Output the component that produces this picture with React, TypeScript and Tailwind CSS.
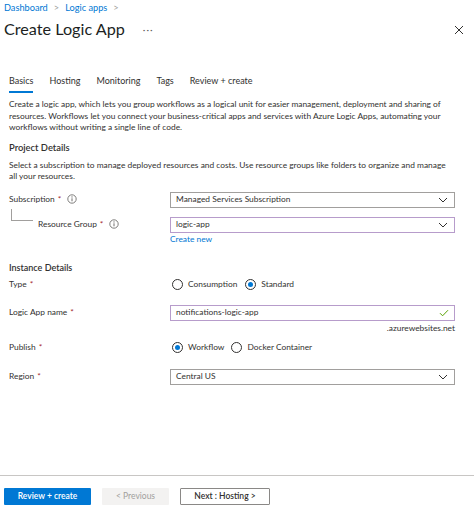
import React from 'react';

const font = { fontFamily: 'Lato, "Open Sans", sans-serif' };

function Info() {
  return (
    <svg width="10" height="10" viewBox="0 0 10 10" className="ml-[6px] shrink-0">
      <circle cx="5" cy="5" r="4.2" fill="none" stroke="#605e5c" strokeWidth="0.8" />
      <line x1="5" y1="4.3" x2="5" y2="7.3" stroke="#605e5c" strokeWidth="0.9" />
      <circle cx="5" cy="2.9" r="0.55" fill="#605e5c" />
    </svg>
  );
}

function Chevron() {
  return (
    <svg width="10" height="6" viewBox="0 0 10 6" className="shrink-0">
      <path d="M1 1l4 4 4-4" fill="none" stroke="#323130" strokeWidth="1" />
    </svg>
  );
}

function Star() {
  return <span className="text-[#a4262c] ml-[3px]">*</span>;
}

function Radio({ checked, label }: { checked?: boolean; label: string }) {
  return (
    <div className="flex items-center">
      <span className="w-[11px] h-[11px] rounded-full border border-[#323130] flex items-center justify-center">
        {checked && <span className="w-[5px] h-[5px] rounded-full bg-[#0078d4]" />}
      </span>
      <span className="ml-[5px]">{label}</span>
    </div>
  );
}

function Select({ value, purple }: { value: string; purple?: boolean }) {
  return (
    <div
      className={`w-[285px] h-[16px] border flex items-center justify-between pl-[5px] pr-[6px] ${
        purple ? 'border-[#b79ccb]' : 'border-[#a19f9d]'
      }`}
    >
      <span>{value}</span>
      <Chevron />
    </div>
  );
}

export default function App() {
  return (
    <div style={font} className="w-[474px] h-[509px] bg-white text-[#323130] text-[8.4px] flex flex-col overflow-hidden">
      {/* Header */}
      <div className="px-[4px]">
        <div className="h-[15px] flex items-center text-[9.2px] text-[#0078d4] gap-[6px]">
          <span>Dashboard</span>
          <span className="text-[#a19f9d]">&gt;</span>
          <span>Logic apps</span>
          <span className="text-[#a19f9d]">&gt;</span>
        </div>
        <div className="h-[29px] flex items-center justify-between">
          <div className="flex items-center">
            <span className="text-[16.2px] text-[#201f1e]">Create Logic App</span>
            <span className="ml-[18px] text-[10px] text-[#605e5c] tracking-[1px]">···</span>
          </div>
          <svg width="10" height="10" viewBox="0 0 10 10" className="mr-[6px]">
            <path d="M1 1l8 8M9 1l-8 8" stroke="#323130" strokeWidth="1" />
          </svg>
        </div>
      </div>

      <div className="flex-1 px-[9px]">
        {/* Tabs */}
        <div className="mt-[30px] h-[21px] flex items-start text-[9px] gap-[16px]">
          <div className="flex flex-col h-full">
            <span className="leading-[14px]">Basics</span>
            <span className="mt-[3px] h-[2px] bg-[#0078d4] w-full" />
          </div>
          <span className="leading-[14px]">Hosting</span>
          <span className="leading-[14px]">Monitoring</span>
          <span className="leading-[14px]">Tags</span>
          <span className="leading-[14px]">Review + create</span>
        </div>

        <p className="mt-[4px] leading-[11.5px] whitespace-nowrap">
          Create a logic app, which lets you group workflows as a logical unit for easier management, deployment and sharing of
          <br />
          resources. Workflows let you connect your business-critical apps and services with Azure Logic Apps, automating your
          <br />
          workflows without writing a single line of code.
        </p>

        <div className="mt-[7px] text-[9.4px] font-semibold leading-[14px]">Project Details</div>
        <p className="mt-[5px] leading-[11.5px] whitespace-nowrap">
          Select a subscription to manage deployed resources and costs. Use resource groups like folders to organize and manage
          <br />
          all your resources.
        </p>

        {/* Subscription */}
        <div className="mt-[9px] flex items-center h-[16px]">
          <div className="w-[161px] flex items-center">
            <span>Subscription</span>
            <Star />
            <Info />
          </div>
          <Select value="Managed Services Subscription" />
        </div>

        {/* Resource group */}
        <div className="mt-[9px] flex items-center h-[16px] relative">
          <div className="w-[161px] flex items-center">
            <span className="absolute left-[2px] -top-[8px] w-[22px] h-[12px] border-l border-b border-[#a19f9d]" />
            <span className="ml-[29px]">Resource Group</span>
            <Star />
            <Info />
          </div>
          <Select value="logic-app" purple />
        </div>
        <div className="ml-[161px] text-[#0078d4] leading-[12px]">Create new</div>

        <div className="mt-[16px] text-[9px] font-semibold leading-[14px]">Instance Details</div>

        {/* Type */}
        <div className="mt-[3px] flex items-center h-[14px]">
          <div className="w-[161px]">
            Type<Star />
          </div>
          <div className="flex items-center pl-[2px] gap-[8px]">
            <Radio label="Consumption" />
            <Radio label="Standard" checked />
          </div>
        </div>

        {/* Logic App name */}
        <div className="mt-[13px] flex items-center h-[16px]">
          <div className="w-[161px]">
            Logic App name<Star />
          </div>
          <div className="w-[285px] h-[16px] border border-[#b79ccb] flex items-center justify-between pl-[5px] pr-[5px]">
            <span>notifications-logic-app</span>
            <svg width="10" height="8" viewBox="0 0 10 8">
              <path d="M1 4.2l2.6 2.6L9 1.2" fill="none" stroke="#57a300" strokeWidth="1" />
            </svg>
          </div>
        </div>
        <div className="ml-[161px] w-[285px] text-right leading-[12px] mt-[1px]">.azurewebsites.net</div>

        {/* Publish */}
        <div className="mt-[7px] flex items-center h-[14px]">
          <div className="w-[161px]">
            Publish<Star />
          </div>
          <div className="flex items-center pl-[2px] gap-[7px]">
            <Radio label="Workflow" checked />
            <Radio label="Docker Container" />
          </div>
        </div>

        {/* Region */}
        <div className="mt-[14px] flex items-center h-[16px]">
          <div className="w-[161px]">
            Region<Star />
          </div>
          <Select value="Central US" />
        </div>
      </div>

      {/* Footer */}
      <div className="h-[34px] border-t border-[#c8c6c4] flex items-start pt-[12px] px-[4px] gap-[11px] text-[8.5px]">
        <button className="w-[87px] h-[17px] bg-[#0078d4] text-white font-semibold rounded-[1px]">Review + create</button>
        <button className="w-[67px] h-[17px] bg-[#f3f2f1] text-[#a19f9d] rounded-[1px]">&lt; Previous</button>
        <button className="w-[90px] h-[17px] border border-[#8a8886] text-[#323130] font-semibold rounded-[1px]">
          Next : Hosting &gt;
        </button>
      </div>
    </div>
  );
}
